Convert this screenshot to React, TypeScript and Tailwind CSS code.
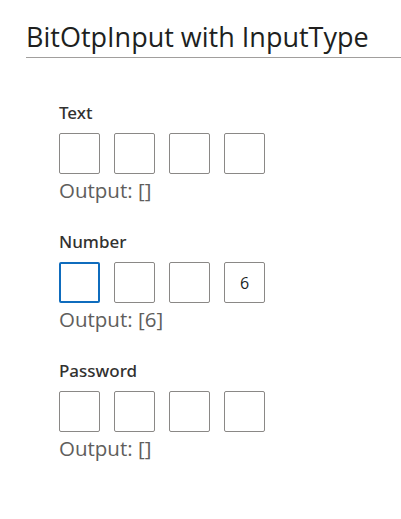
const sections = [
  { label: "Text", values: ["", "", "", ""], output: "Output: []", focus: -1 },
  { label: "Number", values: ["", "", "", "6"], output: "Output: [6]", focus: 0 },
  { label: "Password", values: ["", "", "", ""], output: "Output: []", focus: -1 },
];

function OtpBox({ value, focused }: { value: string; focused: boolean }) {
  return (
    <div
      className={
        focused
          ? "flex h-[41px] w-[41px] items-center justify-center rounded-[2px] border-2 border-[#0f6cbd] text-[16px] text-[#201f1e]"
          : "flex h-[41px] w-[41px] items-center justify-center rounded-[2px] border border-[#8a8886] text-[16px] text-[#201f1e]"
      }
    >
      {value}
    </div>
  );
}

export default function App() {
  return (
    <div
      className="min-h-[519px] bg-white pl-[26px] pt-[20px]"
      style={{ fontFamily: '"Open Sans", "Noto Sans", sans-serif' }}
    >
      <h2 className="border-b border-[#a19f9d] pb-[3px] text-[27px] leading-[34px] text-[#201f1e]">
        BitOtpInput with InputType
      </h2>
      <div className="flex flex-col gap-[28px] pl-[33px] pt-[45px]">
        {sections.map((s) => (
          <div key={s.label} className="flex flex-col">
            <span
              className="text-[17px] font-medium leading-[20px] text-[#323130]"
              style={{ fontFamily: '"Noto Sans", "Open Sans", sans-serif' }}
            >
              {s.label}
            </span>
            <div className="mt-[10px] flex gap-[14px]">
              {s.values.map((v, i) => (
                <OtpBox key={i} value={v} focused={i === s.focus} />
              ))}
            </div>
            <span className="mt-[2px] text-[20.5px] leading-[28px] text-[#605e5c]">
              {s.output}
            </span>
          </div>
        ))}
      </div>
    </div>
  );
}
